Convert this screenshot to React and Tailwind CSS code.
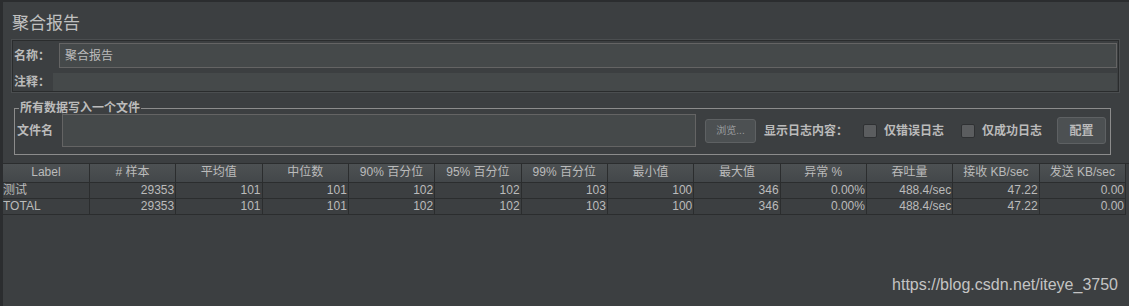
const columns = [
	'Label',
	'# 样本',
	'平均值',
	'中位数',
	'90% 百分位',
	'95% 百分位',
	'99% 百分位',
	'最小值',
	'最大值',
	'异常 %',
	'吞吐量',
	'接收 KB/sec',
	'发送 KB/sec',
];

const rows = [
	['测试', '29353', '101', '101', '102', '102', '103', '100', '346', '0.00%', '488.4/sec', '47.22', '0.00'],
	['TOTAL', '29353', '101', '101', '102', '102', '103', '100', '346', '0.00%', '488.4/sec', '47.22', '0.00'],
];

const cjk = { fontFamily: '"Liberation Sans", "Noto Sans CJK SC", sans-serif' };

function CheckOption({ label }) {
	return (
		<div className="flex items-center gap-[7px] whitespace-nowrap">
			<span className="block w-[14px] h-[14px] bg-[#5b5d5f] border border-[#2f3133] rounded-[2px]" />
			<span className="font-bold text-[12px] text-[#bbbbbb]">{label}</span>
		</div>
	);
}

export default function App() {
	return (
		<div
			className="relative w-[1129px] h-[306px] bg-[#3c3f41] border-t-2 border-l-[3px] border-[#2b2d2f] text-[#bbbbbb] overflow-hidden"
			style={cjk}>
			{/* Title */}
			<div className="pl-[9px] pt-[11px] text-[17px] leading-[22px] text-[#c0c0c0]">
				聚合报告
			</div>

			{/* Name / comment panel */}
			<div className="ml-[9px] mt-[5px] w-[1107px] border border-[#2a2c2d] outline outline-1 outline-[#4b4e50] flex flex-col">
				<div className="flex items-center h-[25px] mt-[2px]">
					<span className="w-[46px] pl-[1px] font-bold text-[12px] whitespace-nowrap">名称：</span>
					<div className="flex-1 h-[25px] mr-[1px] bg-[#45494a] border border-[#646464] flex items-center px-[5px] text-[12px]">
						聚合报告
					</div>
				</div>
				<div className="flex items-center h-[18px] mt-[5px]">
					<span className="w-[40px] pl-[1px] font-bold text-[12px] whitespace-nowrap">注释：</span>
					<div className="flex-1 h-[18px] mr-[1px] bg-[#45494a]" />
				</div>
			</div>

			{/* File output fieldset */}
			<fieldset className="ml-[11px] mt-[9px] w-[1097px] h-[54px] border border-[#8c8c8c] px-[2px] pb-[2px] flex items-center">
				<legend className="px-[1px] ml-[2px] font-bold text-[12px] leading-[14px]">所有数据写入一个文件</legend>
				<div className="flex items-center w-full -mt-[6px] whitespace-nowrap">
					<span className="w-[45px] font-bold text-[12px]">文件名</span>
					<div className="w-[634px] h-[33px] bg-[#45494a] border border-[#646464]" />
					<button className="ml-[9px] w-[51px] h-[24px] bg-[#4c5052] border border-[#5e6163] rounded-[3px] text-[10px] text-[#9a9c9e]">
						浏览...
					</button>
					<span className="ml-[8px] font-bold text-[12px]">显示日志内容：</span>
					<div className="ml-[15px]">
						<CheckOption label="仅错误日志" />
					</div>
					<div className="ml-[17px]">
						<CheckOption label="仅成功日志" />
					</div>
					<button className="ml-[15px] w-[49px] h-[27px] bg-[#4c5052] border border-[#5e6163] rounded-[3px] font-bold text-[12px] text-[#bbbbbb]">
						配置
					</button>
				</div>
			</fieldset>

			{/* Results table */}
			<div className="mt-[8px] border-t border-[#2b2d2e]">
				<table className="table-fixed w-[1123px] border-collapse text-[12px]">
					<thead>
						<tr className="h-[18px] bg-gradient-to-b from-[#4d5153] to-[#43474a]">
							{columns.map((c) => (
								<th
									key={c}
									className="font-normal text-center leading-[17px] border-r border-b border-[#2b2d2e] p-0">
									{c}
								</th>
							))}
						</tr>
					</thead>
					<tbody>
						{rows.map((r) => (
							<tr key={r[0]} className="h-[16px]">
								{r.map((v, i) => (
									<td
										key={i}
										className={`leading-[15px] border-r border-b border-[#2b2d2e] p-0 ${
											i === 0 ? 'text-left' : 'text-right pr-[1px]'
										}`}>
										{v}
									</td>
								))}
							</tr>
						))}
					</tbody>
				</table>
			</div>

			{/* Watermark */}
			<div
				className="absolute right-[11px] bottom-[9px] text-[16px] text-[#c4c4c4]"
				style={{ fontFamily: '"Liberation Sans", sans-serif' }}>
				https://blog.csdn.net/iteye_3750
			</div>
		</div>
	);
}
